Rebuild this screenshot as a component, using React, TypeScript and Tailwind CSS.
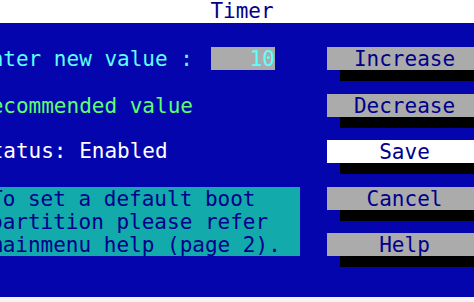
const mono = { fontFamily: '"DejaVu Sans Mono", "Liberation Mono", monospace' };

function DosButton({ label, active }: { label: string; active?: boolean }) {
  return (
    <div
      className={`flex h-[23px] w-[155px] shrink-0 items-start justify-center leading-[25px] text-[#00008b] shadow-[13px_11px_0_0_#000] ${
        active ? 'bg-white' : 'bg-[#ababab]'
      }`}
    >
      {label}
    </div>
  );
}

export default function App() {
  return (
    <div className="flex h-[302px] w-[474px] flex-col overflow-hidden bg-white text-[21px]" style={mono}>
      <div className="flex h-[23px] shrink-0 items-center justify-center pl-[10px] leading-[23px] text-[#00008b]">
        Timer
      </div>

      <div className="flex h-[274px] shrink-0 bg-[#0505ad] pt-[24px]">
        {/* left side: fields and help text, cut off at the screen edge */}
        <div className="ml-[-22px] flex w-[322px] shrink-0 flex-col gap-[23.5px]">
          <div className="flex h-[23px] items-start leading-[25px]">
            <span className="w-[233px] shrink-0 whitespace-pre text-[#5cffff]">Enter new value :</span>
            <span className="flex h-[23px] w-[64px] shrink-0 items-start justify-end bg-[#ababab] text-[#5cffff]">
              10
            </span>
          </div>
          <div className="h-[23px] leading-[25px] whitespace-pre text-[#5cff70]">Recommended value</div>
          <div className="h-[23px] leading-[23px] whitespace-pre text-white">Status: Enabled</div>
          <div className="h-[69px] bg-[#12aaaa] pl-[12px] pt-[1px] leading-[23px] whitespace-pre text-[#00008b]">
            <div>To set a default boot</div>
            <div>partition please refer</div>
            <div className="leading-[22px]">mainmenu help (page 2).</div>
          </div>
        </div>

        {/* right side: buttons with drop shadows */}
        <div className="ml-[27px] flex flex-col gap-[23.5px]">
          <DosButton label="Increase" />
          <DosButton label="Decrease" />
          <DosButton label="Save" active />
          <DosButton label="Cancel" />
          <DosButton label="Help" />
        </div>
      </div>

      <div className="h-[5px] shrink-0 bg-[#f4f4f4]" />
    </div>
  );
}
